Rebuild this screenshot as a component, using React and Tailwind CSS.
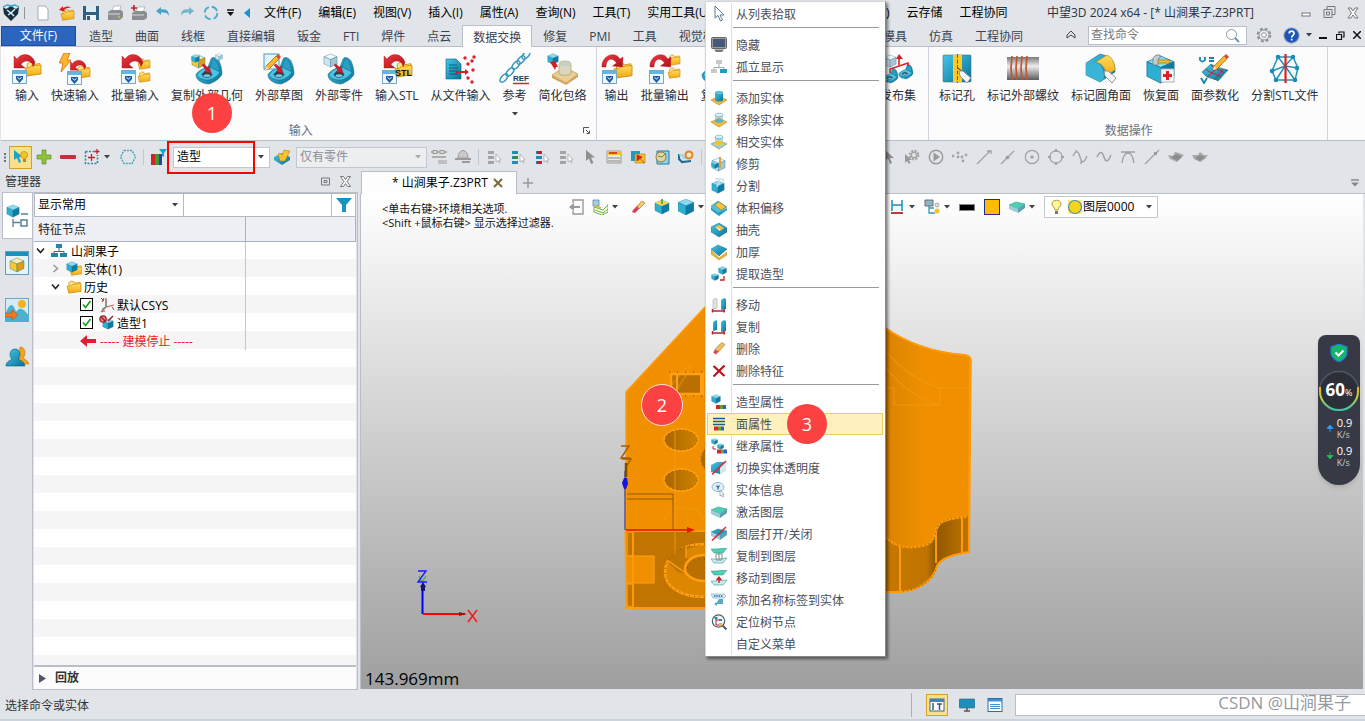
import { useState } from 'react';

const Svg = ({ size = 16, vb = 16, className = '', children }) => (
    <svg width={size} height={size} viewBox={`0 0 ${vb} ${vb}`} fill="none" className={`shrink-0 ${className}`} aria-hidden="true">
        {children}
    </svg>
);

const Caret = ({ color = '#3c404a' }) => (
    <svg width="6" height="4" viewBox="0 0 6 4" className="shrink-0" aria-hidden="true">
        <path d="M0 0h6L3 3.5z" fill={color} />
    </svg>
);

/* ---------- drawing parts shared by the icons ---------- */

const CUBE_TONES = {
    teal: ['#8bdcf0', '#2bb0d3', '#0d7ba3'],
    pale: ['#f2f8fb', '#d2e3ec', '#a9c5d4'],
    gold: ['#ffeaa6', '#fbc834', '#e09c14'],
    grey: ['#e8e8e8', '#cfcfcf', '#b0b0b0'],
};

const Cube = ({ x = 0, y = 0, s = 16, tone = 'teal' }) => {
    const [top, left, right] = CUBE_TONES[tone];
    return (
        <g transform={`translate(${x} ${y}) scale(${s / 16})`} stroke="#1b7393" strokeWidth=".4" strokeLinejoin="round">
            <path d="M1 4 8 1l7 3-7 3z" fill={top} />
            <path d="M1 4l7 3v8l-7-3.500z" fill={left} />
            <path d="M15 4 8 7v8l7-3.500z" fill={right} />
        </g>
    );
};

const Folder = ({ x = 0, y = 0, s = 16 }) => (
    <g transform={`translate(${x} ${y}) scale(${s / 16})`} stroke="#c98a06" strokeWidth=".8" strokeLinejoin="round">
        <path d="M3 13L2 3l3-2 3 1 1 1.500 6-1V11z" fill="#ffe186" />
        <path d="M0 7l4 0 2-2 10-1v9L2 15z" fill="url(#gold)" />
    </g>
);

const AppWindow = ({ x = 1, y = 17 }) => (
    <g transform={`translate(${x} ${y})`}>
        <rect x=".5" y=".5" width="14" height="13" fill="#eef7fd" stroke="#7ba7c6" />
        <path d="M1 1h13v3H1z" fill="#5fb8e4" />
        <path d="M4 6h7v3l-3.500 4L4 9z" fill="#1d5ea8" />
        <path d="M5.500 7.500l2 1.500 2-1.500" stroke="#fff" />
    </g>
);

const ArcIn = () => (
    <path d="M3 3v12h11l-4-3.500c2-4 8-5 11-1l1 3 2-4C22 2 12-2 6 6z" fill="url(#red)" stroke="#a01018" strokeWidth=".4" />
);

const ArcOut = () => (
    <path d="M1 14C0 3 14-3 19 6l3-2-.5 10-10-1 4-3C12 4 5 5 5 14z" fill="url(#red)" stroke="#a01018" strokeWidth=".4" />
);

const Base = () => (
    <g stroke="#0a6484" strokeWidth=".5" strokeLinejoin="round">
        <path d="M5 22c0-3 8-7 12-8l3-8c2-3 6-1 8 2 2 4 3 9 3 13-1 4-9 9-13 10-5 0-13-3-13-9z" fill="url(#teal)" />
        <path d="M19 14l3-9c4 2 6 7 7 14z" fill="#2a9fc4" />
        <path d="M6 22c2-4 8-8 13-8l10 5c-2 4-8 8-12 8s-9-1-11-5z" fill="#4cc3e2" />
        <ellipse cx="16" cy="21.500" rx="5" ry="3" fill="#29434f" />
        <ellipse cx="16" cy="22.700" rx="3.600" ry="1.600" fill="#8fc9da" />
    </g>
);

const RedPointer = () => <path d="M11 12l2-1 4 4 1-2 2 7-7-1 2-2z" fill="#d01f28" stroke="#8e1016" strokeWidth=".4" />;

const Tag = ({ x = 0, y = 0 }) => (
    <path transform={`translate(${x} ${y})`} d="M0 1l4 0 8 7-4 5-7-7z" fill="#f7f7f7" stroke="#888" strokeWidth=".9" />
);

const Pencil = ({ x = 0, y = 0 }) => (
    <g transform={`translate(${x} ${y})`}>
        <path d="M2 12L12 2l3 3L5 15l-4 1z" fill="#f8b62a" stroke="#9a6408" strokeWidth=".7" />
        <path d="M12 2l2-2 3 3-2 2z" fill="#e0453c" />
        <path d="M2 12l3 3-4 1z" fill="#f5dfb8" />
    </g>
);

const ribbonArt = {
    import: <><Folder x={14} y={8} s={16} /><ArcIn /><AppWindow /></>,
    quick: <><Folder x={17} y={12} s={14} /><g transform="translate(9 6) scale(.75)"><ArcIn /></g><AppWindow x={8} y={18} /><path d="M5 0h6L8 7h4L2 19l2-9H0z" fill="#ffb62b" stroke="#d06a10" strokeWidth=".8" /></>,
    batchIn: <><Folder x={19} y={5} s={12} /><Folder x={19} y={18} s={12} /><ArcIn /><AppWindow x={2} /></>,
    copyGeo: <><Base /><Cube x={0} y={1} s={15} tone="gold" /><Cube x={0} y={1} s={9} /><Cube x={24} y={0} s={8} tone="pale" /><RedPointer /></>,
    sketch: <><Base /><rect x="1" y="1" width="15" height="15" fill="#e4f5fc" stroke="#3c9cc0" /><Pencil x={1} y={1} /><RedPointer /></>,
    part: <><Base /><Cube x={0} y={0} s={15} tone="pale" /><RedPointer /></>,
    stl: <><Folder x={14} y={8} s={17} /><ArcIn /><AppWindow /><text x="14" y="23" fontSize="9" fontWeight="700" fill="#111" fontFamily="Liberation Sans, sans-serif">STL</text></>,
    fromFile: (
        <>
            <path d="M1 6h10l5 5v15H1z" fill="url(#teal)" stroke="#0a5f80" strokeWidth=".6" />
            <path d="M4 12h8M4 15h9M4 18h9M4 21h9" stroke="#0a5a78" />
            <path d="M11 18h9v-2l4 3-4 3v-2h-9z" fill="#d01f28" />
            {[[20, 5], [27, 8], [23, 11], [28, 17], [23, 25], [27, 29], [29, 4]].map(([cx, cy]) => (
                <circle key={`${cx}-${cy}`} cx={cx} cy={cy} r="1.700" fill="#d8232c" />
            ))}
        </>
    ),
    ref: (
        <>
            {[[5, 25], [11, 19], [17, 12], [22, 7], [27, 2]].map(([cx, cy]) => (
                <ellipse key={cx} cx={cx} cy={cy} rx="5" ry="2.600" transform={`rotate(-48 ${cx} ${cy})`} stroke="#3a97bd" strokeWidth="1.500" />
            ))}
            <text x="14" y="28" fontSize="8" fontWeight="700" fill="#1d3f5c" fontFamily="Liberation Sans, sans-serif">REF</text>
            <path d="M14 30.500h16" stroke="#e0222c" strokeWidth="1.500" />
        </>
    ),
    wrap: (
        <>
            <path d="M5 22l12-8 14 7-12 9z" fill="#e9cf94" stroke="#b98a3a" strokeWidth=".6" />
            <path d="M5 22v3l14 7 12-8v-3l-12 9z" fill="#d0a660" />
            <path d="M12 11c0-4 12-4 12 0v9c0 3-12 3-12 0z" fill="#dcd6bd" stroke="#9a9374" strokeWidth=".6" />
            <ellipse cx="18" cy="11" rx="6" ry="2.500" fill="#c2d2c1" />
            <Cube x={0} y={0} s={12} />
            <path d="M3 9l5 8 1-3 2 0-3-6z" fill="#d01f28" />
        </>
    ),
    export: <><Folder x={13} y={8} s={18} /><ArcOut /><AppWindow /></>,
    batchOut: <><Folder x={19} y={1} s={12} /><Folder x={19} y={14} s={12} /><ArcOut /><AppWindow x={0} /></>,
    copyOut: <><Base /><RedPointer /></>,
    publish: (
        <>
            <Cube x={1} y={1} s={14} tone="pale" />
            <g transform="translate(-1 13) scale(.55)"><Base /></g>
            <g transform="translate(14 9) scale(.55)"><Base /></g>
            <path d="M8 20v-4l18-6v3M17 12V5" stroke="#d01f28" strokeWidth="1.600" />
            <path d="M14 6l3-5 4 5z" fill="#d01f28" />
        </>
    ),
    hole: (
        <>
            <rect x="2" y="2" width="28" height="27" rx="1" fill="url(#teal)" stroke="#3a7388" strokeWidth=".6" />
            <path d="M12 2h9v27h-9z" fill="#ffc928" />
            <path d="M16.500 1v29" stroke="#7c5a00" strokeDasharray="4 1.500" />
            <path d="M17 15l5 4" stroke="#333" />
            <Tag x={18} y={17} />
        </>
    ),
    thread: (
        <>
            <path d="M0 4h32v23H0z" fill="url(#steel)" />
            <path d="M5 3l-1 12 1 12M10 3L9 15l1 12M15 3l-1 12 1 12M20 3l-1 12 1 12" stroke="#c0552e" strokeWidth="1.700" />
        </>
    ),
    fillet: (
        <>
            <path d="M1 10L15 1l7 2c7 3 8 10 8 16L15 29 1 22z" fill="url(#teal)" stroke="#0a5a78" strokeWidth=".5" />
            <path d="M11 9L22 2c5 2 8 8 8 15l-9 6c0-7-3-12-10-14z" fill="url(#gold)" stroke="#b87d05" strokeWidth=".5" />
            <path d="M1 10l10 0c6 2 8 8 8 16l-4 3L1 22z" fill="#3ab4d6" />
            <Tag x={19} y={17} />
        </>
    ),
    heal: (
        <>
            <Cube x={0} y={1} s={31} />
            <path d="M9 7h16v3H9z" fill="#f7bd2d" stroke="#8d6205" strokeWidth=".6" />
            <path d="M8 12V5l3-3h4v3l-2 1v6z" fill="#c3cbd0" stroke="#6b757c" strokeWidth=".7" />
            <rect x="16" y="16" width="13" height="13" fill="#f4f8fa" stroke="#a8b5bc" />
            <path d="M21 18h3v3h3v3h-3v3h-3v-3h-3v-3h3z" fill="#e01f26" />
        </>
    ),
    param: (
        <>
            <path d="M3 19l9-8c5 3 9 4 17 6l-10 11C13 24 9 27 3 19z" fill="url(#teal)" stroke="#07506e" strokeWidth=".5" />
            <path d="M7 16c5 5 9 4 15 8M12 12c5 5 9 5 13 8M8 24c4-2 8-8 12-11M15 27c3-4 6-6 9-11" stroke="#c7202a" />
            <path d="M1 4v3q2.500 3 5 0V4M10 5h5M10 8h5M2 25l3 5 3-5" stroke="#1484b0" strokeWidth="1.800" />
            <Pencil x={13} y={1} />
        </>
    ),
    split: (
        <>
            <path d="M9 4h15l5 11-3 12H7L3 18zM3 18l13-5 13 2M16 13L9 4M16 13l8-9M16 13l-9 14M16 13l10 14" stroke="#2191ba" strokeWidth="1.500" />
            {[[9, 4], [24, 4], [26, 27], [3, 18], [7, 27], [28, 15]].map(([cx, cy]) => (
                <circle key={`${cx}-${cy}`} cx={cx} cy={cy} r="2.300" fill="#1d8ab2" />
            ))}
            <path d="M16.500 1v29" stroke="#e01f26" strokeWidth="2.200" />
        </>
    ),
};

const Plate = ({ tone = '#f5b93a' }) => <path d="M0 10l8-4 8 4-8 5z" fill={tone} stroke="#a8690c" strokeWidth=".5" />;
const Cyl = ({ fill = 'url(#teal)', top = '#5cc6e2' }) => (
    <>
        <path d="M4 3v7c0 2 8 2 8 0V3z" fill={fill} />
        <ellipse cx="8" cy="3" rx="4" ry="1.800" fill={top} stroke="#0f7fa5" strokeWidth=".4" />
    </>
);
const Swatches = ({ x = 5, y = 11 }) => (
    <g transform={`translate(${x} ${y})`}>
        <path d="M0 0h4v4H0z" fill="#d9262c" />
        <path d="M4 0h3v4H4z" fill="#5ea32c" />
        <path d="M7 0h3v4H7z" fill="#2c5fd0" />
    </g>
);
const Layer = ({ y = 0, top = '#4fd0b4' }) => (
    <g transform={`translate(0 ${y})`}>
        <path d="M0 4l7-3 9 2-7 5z" fill={top} stroke="#1a8f86" strokeWidth=".5" />
        <path d="M0 4v4l9 4V8z" fill="#9ccdd6" />
        <path d="M9 8l7-5v4l-7 5z" fill="#5a9fb2" />
    </g>
);
const Sheet = ({ y = 0, fill = '#4fd0b4' }) => <path transform={`translate(0 ${y})`} d="M0 1l5 0 11-1-4 5-9 0z" fill={fill} stroke="#1c8c80" strokeWidth=".5" />;

const menuArt = {
    pick: <path d="M4 0v12l3-2.500L9.500 15l2-1L9 9h4z" fill="#fff" stroke="#5d7890" />,
    hide: <><rect x=".5" y=".5" width="15" height="11" rx="1" fill="#9a9a9a" stroke="#666" /><rect x="2" y="2" width="12" height="8" fill="#48587a" /><path d="M3 12.500h10l-2 2.500H5z" fill="#777" /></>,
    isolate: <><path d="M8 5v4M3 11V8.500h10V11" stroke="#aaa" /><rect x="5" y="1" width="6" height="4" fill="#c8c8c8" /><rect x="0" y="10" width="6" height="4" fill="#c8c8c8" /><rect x="9" y="10" width="7" height="4" fill="#1c9ec4" /></>,
    add: <><Plate /><Cyl /></>,
    remove: <><Cyl fill="#b7dfec" top="#dff1f7" /><Plate /><ellipse cx="8" cy="9" rx="4" ry="1.800" fill="#4fb0cf" /></>,
    intersect: <><Plate tone="#8fd3e6" /><Cyl fill="#a6dcea" top="#d8f1f8" /><ellipse cx="8" cy="9" rx="4" ry="2.500" fill="#f4c32c" /></>,
    trim: <><Cube x={0} y={1} s={15} tone="pale" /><Cube x={0} y={5} s={8} /><path d="M9 1v11" stroke="#e0a23a" strokeWidth="2" /></>,
    divide: <><Cube x={0} y={2} s={14} /><path d="M9 2L6 9M4 1h8v3" stroke="#cfdfe6" strokeWidth="1.400" /></>,
    offset: <><path d="M0 7l7 6 9-5v2l-8 6-8-6z" fill="#1c9ec4" /><path d="M0 6l7-5 9 6-9 6z" fill="#54bfd9" stroke="#0a5a78" strokeWidth=".4" /><path d="M4 5l4-3 7 5-5 3z" fill="#fbc63a" stroke="#a97408" strokeWidth=".5" /></>,
    shell: <><path d="M0 5l8-4 8 5v4l-8 5-8-5z" fill="url(#teal)" stroke="#0a5a78" strokeWidth=".4" /><path d="M4 5l4-2 5 3-4 3z" fill="#f6c13b" /><path d="M4 5l5 2v2z" fill="#fff3c8" /></>,
    thicken: <><path d="M0 6l8 8 8-6v3l-8 5-8-6z" fill="#f3b52c" stroke="#a97408" strokeWidth=".4" /><path d="M0 5l7-4 9 4-8 7z" fill="url(#teal)" stroke="#0a5a78" strokeWidth=".4" /></>,
    extract: <><Cube x={7} y={0} s={9} /><Cube x={0} y={7} s={8} /><path d="M13 10v4H9" stroke="#c7202a" strokeWidth="1.300" /></>,
    move: <><path d="M2 3l3-2 1 1v9l-4 1z" fill="#e3e3e3" stroke="#999" strokeWidth=".5" /><path d="M10 3l3-2 2 1v10l-5 1z" fill="url(#teal)" /><path d="M1 14h13M1.500 12v3.500M13 12v3.500" stroke="#b8242c" strokeWidth="1.500" /></>,
    copy: <><path d="M2 3l3-2 1 1v9l-4 1z" fill="url(#teal)" /><path d="M10 3l3-2 2 1v10l-5 1z" fill="url(#teal)" /><path d="M1 14h13M1.500 12v3.500M13 12v3.500" stroke="#b8242c" strokeWidth="1.500" /></>,
    erase: <><path d="M8 4l3-2.500 3 2-6 7-4-2z" fill="#efc05c" stroke="#8a6a3a" strokeWidth=".5" /><path d="M4 8.500l4 2-3 3-3-2z" fill="#d9515c" /></>,
    remFeat: <path d="M2.500 3l11 10M13.500 2.500l-11 11" stroke="#b9141c" strokeWidth="2.200" />,
    shapeAttr: <><Cube x={0} y={0} s={10} /><Swatches /></>,
    faceAttr: <><path d="M2 2.500h12M2 5.500h12M2 8.500h12" stroke="#1d5f86" strokeWidth="1.500" /><Swatches x={3} y={10.5} /></>,
    inherit: <><Cube x={0} y={0} s={7} /><Cube x={6} y={5} s={7} /><path d="M2 8v3h3" stroke="#c7202a" /><Swatches x={6} y={11.5} /></>,
    opacity: <><path d="M0 5l6-3 9 0v8l-6 4-9-2z" fill="url(#teal)" /><path d="M9 14V6l6-4v8z" fill="#d5eaf1" /><path d="M1 14.500L15 1" stroke="#e0222c" strokeWidth="1.500" /></>,
    info: <><ellipse cx="7" cy="5" rx="6" ry="4.500" fill="#dbeefa" stroke="#92b7cc" /><path d="M5.500 3.500l1.500 2 1.500-2M7 5.500v2" stroke="#2c5d86" strokeWidth="1.200" /><path d="M9 8v6l1.500-1 1 2 1.200-.6-1-2H13z" fill="#fff" stroke="#7d95a5" strokeWidth=".7" /></>,
    layerOn: <Layer y={2} />,
    layerToggle: <><Layer y={2} top="#1c9ec4" /><path d="M1 14.500L15 1" stroke="#e0222c" strokeWidth="1.500" /></>,
    layerCopy: <><Sheet y={10} fill="#c9eaf2" /><path d="M5 6h6v6H5zM8 4v8" stroke="#8a8f92" /><Sheet y={0} /></>,
    layerMove: <><Sheet y={10} fill="#c9eaf2" /><Sheet y={0} /><path d="M8 13V8M6 9.500L8 7l2 2.500z" fill="#d01f28" stroke="#d01f28" strokeWidth="1.300" /></>,
    label: <><path d="M0 2h13l2 2-2 2H2z" fill="#d8edf7" stroke="#6fa3bd" strokeWidth=".6" /><path d="M3 4h9" stroke="#2c6d90" strokeDasharray="1.500 .8" strokeWidth="1.400" /><path d="M8 7l4 0v5H6v2l-3-2 3-2z" fill="#5aa8c8" /></>,
    locate: <><circle cx="7.500" cy="7" r="6.200" stroke="#555f66" strokeWidth="1.200" fill="#f3f8fa" /><path d="M5 3v8h3M5 6h4" stroke="#b8242c" /><rect x="3.500" y="3" width="3" height="2" fill="#1c8fb6" /><rect x="8" y="5" width="3" height="2" fill="#1c8fb6" /><rect x="8" y="9" width="3" height="3" fill="#f0b62e" /><path d="M11.500 11.500l4 4" stroke="#555f66" strokeWidth="2" /></>,
};

const menuGroups = [
    [['pick', '从列表拾取']],
    [['hide', '隐藏'], ['isolate', '孤立显示']],
    [['add', '添加实体'], ['remove', '移除实体'], ['intersect', '相交实体'], ['trim', '修剪'], ['divide', '分割'], ['offset', '体积偏移'], ['shell', '抽壳'], ['thicken', '加厚'], ['extract', '提取造型']],
    [['move', '移动'], ['copy', '复制'], ['erase', '删除'], ['remFeat', '删除特征']],
    [['shapeAttr', '造型属性'], ['faceAttr', '面属性'], ['inherit', '继承属性'], ['opacity', '切换实体透明度'], ['info', '实体信息'], ['layerOn', '激活图层'], ['layerToggle', '图层打开/关闭'], ['layerCopy', '复制到图层'], ['layerMove', '移动到图层'], ['label', '添加名称标签到实体'], ['locate', '定位树节点'], ['', '自定义菜单']],
];

function ContextMenu() {
    return (
        <div role="menu" className="absolute left-[705px] top-px w-[181px] z-20 bg-white border border-[#d4d6da] border-b-[#8a8a8a] border-r-[#8a8a8a] shadow-[2px_2px_3px_rgba(0,0,0,0.5)] py-px text-[#4a4e5a]">
            <div className="relative pl-px pr-0.5 before:absolute before:left-[25px] before:top-0 before:bottom-0 before:w-px before:bg-[#dcdee2]">
                {menuGroups.map((group, i) => (
                    <div key={i}>
                        {i > 0 && <div className="ml-[26px] mr-1 mt-0.5 mb-1.5 h-px bg-[#9a9a9a]" />}
                        {group.map(([icon, label]) => (
                            <button
                                key={label}
                                type="button"
                                role="menuitem"
                                className={`relative flex items-center w-full h-[22px] text-left ${icon === 'faceAttr' ? 'bg-[#fff0bd] outline outline-[#f0cd5a] -outline-offset-1' : ''}`}
                            >
                                <span className="w-6 flex justify-center mr-[5px]">
                                    {icon && <Svg>{menuArt[icon]}</Svg>}
                                </span>
                                <span className="pt-0.5">{label}</span>
                            </button>
                        ))}
                    </div>
                ))}
            </div>
        </div>
    );
}

/* ---------- title bar ---------- */

const quickIcons = [
    ['新建', <path key="a" d="M3 1h7l3 3v11H3z" fill="#fff" stroke="#a5acb5" />],
    ['打开', <g key="a"><Folder x={2} y={3} s={13} /><path d="M0 5l4-4v2c3-2 6-2 8 0-3-.5-5 0-7 2l2 2z" fill="#d01f28" /></g>],
    ['保存', <g key="a"><path d="M0 1h16v14H0z" fill="#315f80" /><path d="M3 1h10v6H3z" fill="#d9eaf3" /><path d="M3 10h10v5H3z" fill="#eef2f4" /><path d="M4 11h3v4H4z" fill="#315f80" /></g>],
    ['打印', <g key="a"><path d="M5 6l2-5h7l-2 6z" fill="#fff" stroke="#999" strokeWidth=".6" /><path d="M1 7l3-2h10l2 2v5l-3 3H1z" fill="#8a8d91" /><path d="M1 9h12" stroke="#d8d8d8" /><circle cx="12" cy="12" r="1" fill="#b2d62c" /></g>],
    ['批量打印', <g key="a"><path d="M5 6l2-4h7l-2 5z" fill="#fff" stroke="#999" strokeWidth=".6" /><path d="M1 8l3-2h10l2 2v5l-3 2H1z" fill="#8a8d91" /><path d="M1 10h12" stroke="#d8d8d8" /><path d="M3 0v6M0 3h6" stroke="#b8242c" strokeWidth="1.600" /></g>],
    ['撤销', <path key="a" d="M1 6l5-4v2.500c6-1.500 8 2 8 6.500-1-3-4-4-8-3.500V10z" fill="#4aa3c4" />],
    ['重做', <path key="a" d="M15 6l-5-4v2.500C4 3 2 6.500 2 11c1-3 4-4 8-3.500V10z" fill="#6fb5cc" />],
    ['再生', <circle key="a" cx="8" cy="8" r="6.300" stroke="#4aabc9" strokeWidth="1.800" strokeDasharray="6.900 3" />],
];

const menus = ['文件(F)', '编辑(E)', '视图(V)', '插入(I)', '属性(A)', '查询(N)', '工具(T)', '实用工具(U)'];
const tabs = ['造型', '曲面', '线框', '直接编辑', '钣金', 'FTI', '焊件', '点云', '数据交换', '修复', 'PMI', '工具', '视觉样式'];

function TitleBar() {
    return (
        <header className="flex items-center h-[25px] shrink-0 text-black">
            <div className="flex items-center w-[879px] shrink-0 overflow-hidden whitespace-nowrap">
                <Svg size={18} vb={18} className="ml-0.5">
                    <path d="M1 3l3 2 5-3 5 3 3-2-1 7-7 7-7-7z" fill="#16303f" />
                    <path d="M5 6l4 3 4-4M6 11l3-2 3 3" stroke="#d9f0fa" strokeWidth="1.500" />
                    <path d="M1 3l4-2 4 1 4-1 4 2" stroke="#2aa4cf" strokeWidth="1.300" />
                </Svg>
                <span className="w-px h-3 bg-[#8f949c] ml-1 mr-1.5" />
                {quickIcons.map(([label, art]) => (
                    <button key={label} type="button" aria-label={label} className="w-6 flex justify-center">
                        <Svg>{art}</Svg>
                    </button>
                ))}
                <button type="button" aria-label="自定义快速访问" className="w-3.5 flex justify-center">
                    <Svg size={7} vb={7}><path d="M0 1h7" stroke="#111" strokeWidth="1.500" /><path d="M0 3h7L3.500 7z" fill="#111" /></Svg>
                </button>
                <button type="button" aria-label="收起菜单" className="w-5 flex justify-center mr-[7px]">
                    <Svg size={10} vb={10}><path d="M8 0v10L2 5z" fill="#1593d8" /></Svg>
                </button>
                <nav className="flex gap-[17px]">
                    {menus.map(m => <button key={m} type="button">{m}</button>)}
                </nav>
            </div>
            <nav className="flex gap-[17px] whitespace-nowrap">
                <button type="button">(I)</button>
                <button type="button">云存储</button>
                <button type="button">工程协同</button>
            </nav>
            <h1 className="ml-auto mr-[46px] whitespace-nowrap text-[#2d3342]">中望3D 2024 x64 - [* 山涧果子.Z3PRT]</h1>
            <div className="flex items-center gap-[11px] pr-1.5">
                <button type="button" aria-label="最小化"><Svg size={12} vb={12}><rect x="2" y="6" width="8" height="3" stroke="#777" fill="#fff" /></Svg></button>
                <button type="button" aria-label="还原"><Svg size={13} vb={13}><path d="M4 3.500v-3h8v8H9M1 3.500h8v8H1zM3.500 6h3v3h-3z" stroke="#777" /></Svg></button>
                <button type="button" aria-label="关闭"><Svg size={12} vb={12}><path d="M1 1h3l2 3 2-3h3L7.500 6 11 11H8L6 8l-2 3H1l3.500-5z" fill="#fff" stroke="#777" /></Svg></button>
            </div>
        </header>
    );
}

function TabRow() {
    return (
        <div className="flex h-[22px] shrink-0 shadow-[inset_0_-1px_0_#b9bec8] text-[#3b4252]">
            <div className="flex w-[872px] shrink-0 overflow-hidden whitespace-nowrap pl-px">
                <button type="button" className="w-[75px] my-px mr-0.5 bg-[#2b65bd] border border-[#1c4c9c] text-white">文件(F)</button>
                {tabs.map(t => (
                    <button
                        key={t}
                        type="button"
                        className={`pt-0.5 ${t === '数据交换' ? 'px-2.5 bg-[#fdfdfd] border border-b-0 border-[#b9bec8]' : 'px-[11px]'}`}
                    >
                        {t}
                    </button>
                ))}
            </div>
            {['模具', '仿真', '工程协同'].map(t => (
                <button key={t} type="button" className="pt-0.5 px-[11px] whitespace-nowrap">{t}</button>
            ))}
            <div className="flex items-center ml-auto pr-1 pb-0.5">
                <button type="button" aria-label="折叠功能区" className="mr-3">
                    <Svg size={10} vb={10}><path d="M1 5l4-4 4 4M1 8V5M9 8V5M1 8l4-3 4 3" stroke="#444" /></Svg>
                </button>
                <label className="flex items-center w-[159px] h-[19px] bg-white border border-[#b9bec8]">
                    <input type="search" aria-label="查找命令" placeholder="查找命令" className="w-full min-w-0 px-0.5 outline-none placeholder:text-[#777]" />
                    <Svg size={15} vb={15} className="mr-1.5"><circle cx="6.500" cy="6.500" r="5" stroke="#8b98a2" /><path d="M10 10l4 4" stroke="#5a9ab8" strokeWidth="2" /></Svg>
                </label>
                <button type="button" aria-label="设置" className="ml-[9px]">
                    <Svg><circle cx="8" cy="8" r="6.300" stroke="#8d9298" strokeWidth="2" strokeDasharray="2.900 2.050" /><circle cx="8" cy="8" r="5" stroke="#8d9298" fill="#eceef0" /><circle cx="8" cy="8" r="2.300" stroke="#8d9298" fill="#fff" /></Svg>
                </button>
                <button type="button" aria-label="帮助" className="flex items-center gap-1.5 ml-[11px] mr-[7px]">
                    <Svg size={17} vb={16}>
                        <circle cx="8" cy="8" r="7.300" fill="#1c56b5" stroke="#a9b6c9" />
                        <path d="M5.800 6.200c0-3 4.600-3 4.600 0 0 1.800-2.200 1.600-2.200 3.600M8.200 11v1.700" stroke="#fff" strokeWidth="1.600" />
                    </Svg>
                    <Caret />
                </button>
                <button type="button" aria-label="最小化文档" className="mr-[9px]"><Svg size={8} vb={8}><path d="M0 7h8" stroke="#111" strokeWidth="2" /></Svg></button>
                <button type="button" aria-label="还原文档" className="mr-2"><Svg size={9} vb={9}><path d="M3 2.500V1h5v5H6.500M.5 3.500h5v5h-5z" stroke="#111" strokeWidth="1.200" /></Svg></button>
                <button type="button" aria-label="关闭文档"><Svg size={8} vb={8}><path d="M0 0l8 8M8 0L0 8" stroke="#111" strokeWidth="1.500" /></Svg></button>
            </div>
        </div>
    );
}

/* ---------- ribbon ---------- */

const importTools = [['import', '输入'], ['quick', '快速输入'], ['batchIn', '批量输入'], ['copyGeo', '复制外部几何'], ['sketch', '外部草图'], ['part', '外部零件'], ['stl', '输入STL'], ['fromFile', '从文件输入'], ['ref', '参考'], ['wrap', '简化包络']];
const exportTools = [['export', '输出'], ['batchOut', '批量输出'], ['copyOut', '复制']];
const dataTools = [['hole', '标记孔'], ['thread', '标记外部螺纹'], ['fillet', '标记圆角面'], ['heal', '恢复面'], ['param', '面参数化'], ['split', '分割STL文件']];

function RibbonGroup({ tools, label, launcher, className = '' }) {
    return (
        <section className={`relative flex flex-col justify-between shrink-0 border-r border-[#cfd4de] ${className}`}>
            <div className="flex">
                {tools.map(([icon, text]) => (
                    <button key={icon} type="button" className="flex flex-col items-center px-1.5 pt-1.5 whitespace-nowrap">
                        <Svg size={32} vb={32} className="-mx-1">{ribbonArt[icon]}</Svg>
                        <span className="mt-[3px]">{text}</span>
                        {icon === 'ref' && <span className="mt-2"><Caret /></span>}
                    </button>
                ))}
            </div>
            {label && <h2 className="text-center text-[#6b7080] pb-px">{label}</h2>}
            {launcher && (
                <button type="button" aria-label="更多选项" className="absolute right-1.5 bottom-1.5">
                    <Svg size={7} vb={7}><path d="M.5 6V.5H6M3 3l3 3M6.500 3.500v3h-3" stroke="#555" /></Svg>
                </button>
            )}
        </section>
    );
}

function Ribbon() {
    return (
        <div className="flex h-[94px] shrink-0 ml-px bg-[#fcfcfc] border-b border-[#b9bec8] text-[#2b2e36]">
            <div className="flex w-[873px] shrink-0 overflow-hidden">
                <RibbonGroup tools={importTools} label="输入" launcher className="pl-2 pr-[3px]" />
                <RibbonGroup tools={exportTools} className="pl-0.5 border-r-0" />
            </div>
            <RibbonGroup tools={[['publish', '发布集']]} className="pr-1.5" />
            <RibbonGroup tools={dataTools} label="数据操作" className="pl-1 pr-0.5" />
        </div>
    );
}

/* ---------- selection toolbar ---------- */

const Dots = ({ color }) => (
    <g>
        <path d="M2 2h6v3H2zM2 7h6v3H2zM2 12h6v3H2z" fill={color} />
        <path d="M10 5v8l2-1.500L13 14l1-.5-1-2.500h2z" fill="#fff" stroke="#a8a8a8" strokeWidth=".8" />
    </g>
);

const filterIcons = [
    <g key="0" stroke="#9a9a9a"><path d="M0 3h16M1 8h14" strokeWidth="1.500" /><rect x="2" y="1.500" width="4" height="3" fill="#ddd" /><rect x="9" y="1.500" width="4" height="3" fill="#ddd" /><path d="M7 12h9M7 14h9" /></g>,
    <g key="1" stroke="#9a9a9a"><path d="M3 9c0-10 10-10 10 0z" fill="#c9c9c9" /><path d="M0 10h16M7 13h8" strokeWidth="2" /></g>,
];
const pickIcons = [
    <Dots key="2" color="#a3a3a3" />,
    <g key="3"><Dots color="#1c8fb6" /><path d="M3 7h4v3H3z" fill="#2f8f3c" /></g>,
    <g key="4"><Dots color="#1c8fb6" /><path d="M3 2h5v3H3zM3 12h5v3H3z" fill="#c7202a" /></g>,
    <Dots key="5" color="#a3a3a3" />,
    <path key="6" d="M4 1v11l3-2.500L9 15l2.500-1L9 8.500h4z" fill="#8f8f8f" />,
    <g key="7"><path d="M1 2h14v12H1z" fill="#e8e8e8" stroke="#999" /><path d="M1 2h14v4H1z" fill="#f5c22f" /><path d="M3 4h8" stroke="#c7202a" strokeWidth="1.500" /><path d="M2 9h12M2 12h12" stroke="#888" /></g>,
    <g key="8"><path d="M1 2h9v10H1z" fill="#1c9ec4" /><path d="M5 5h10v9H5z" fill="#f5c22f" stroke="#b0790a" strokeWidth=".6" /><path d="M7 6v6l5-4zM10 9l4 5" fill="#d01f28" stroke="#d01f28" strokeWidth=".8" /></g>,
    <g key="9"><path d="M3 2h12v13H3z" fill="#8fd0e4" stroke="#1c7fa3" /><circle cx="7" cy="8" r="5" fill="#e7d2a5" stroke="#8e7a4a" /><path d="M4 7l4 1 4-4" stroke="#4b9b3c" /></g>,
    <g key="10"><path d="M1 5v5l3 3 9-1" stroke="#1c6f93" strokeWidth="2.200" /><path d="M1 6h4v3h5" stroke="#9fcfe0" strokeWidth="1.400" /><circle cx="11" cy="6" r="3.500" stroke="#d8862a" strokeWidth="2" fill="#fbe3b4" /></g>,
];
const snapIcons = [
    <path key="0" d="M5 1v11l3-2.500L10 15l2-1-2-5h4z" fill="#8f8f8f" />,
    <g key="1"><circle cx="10" cy="6" r="4.200" stroke="#a5a5a5" strokeWidth="2.400" strokeDasharray="2 1.300" /><circle cx="10" cy="6" r="2.800" stroke="#a5a5a5" strokeWidth="1.500" /><path d="M1 5v9l2-2 2 3 1.500-1L5 11h3z" fill="#999" /></g>,
    <g key="2"><circle cx="8" cy="8" r="6.700" stroke="#999" strokeWidth="1.400" /><path d="M5.500 3.500l6.500 4.500-6.500 4.500z" fill="#999" /></g>,
    <g key="3" fill="#a3a3a3">{[[1, 7], [6, 4], [6, 8], [10, 8], [14, 6], [11, 12]].map(([x, y]) => <circle key={`${x}${y}`} cx={x} cy={y} r="1.400" />)}</g>,
    <path key="4" d="M1 15L14 2M11 2h4v3" stroke="#a0a0a0" strokeWidth="1.300" />,
    <g key="5"><path d="M1 15L14 2" stroke="#a0a0a0" strokeWidth="1.300" /><circle cx="7.500" cy="8.500" r="1.800" fill="#999" /></g>,
    <g key="6"><circle cx="8" cy="8" r="6.700" stroke="#a0a0a0" strokeWidth="1.200" /><circle cx="8" cy="8" r="1.500" fill="#999" /></g>,
    <g key="7"><circle cx="8" cy="8" r="6.200" stroke="#a0a0a0" strokeWidth="1.200" /><path d="M8 0v3M8 13v3M0 8h3M13 8h3" stroke="#a0a0a0" strokeWidth="2" /></g>,
    <path key="8" d="M1 7c3-6 5-6 7 1s4 6 7-1M4 1v3M9 12v3" stroke="#a0a0a0" strokeWidth="1.300" />,
    <path key="9" d="M1 8c3-6 5-6 7 0s4 5 7-2" stroke="#a0a0a0" strokeWidth="1.500" />,
    <path key="10" d="M1 3h14M2 14C3 7 5 4 8 4s5 3 6 10" stroke="#a0a0a0" strokeWidth="1.300" />,
    <g key="11"><path d="M1 15L15 1" stroke="#a0a0a0" strokeWidth="1.300" /><path d="M10 3h3v3h-3z" fill="#999" /></g>,
    <g key="12"><path d="M0 6l5 1 2-4 4 1 5 2-3 3-4 4-7-3z" fill="#a9a9a9" /><path d="M3 8l6-3 5 3-5 4z" fill="#8c8c8c" /></g>,
    <g key="13"><path d="M0 6l6 0 2-3 4 3 4 0-3 4-5 3-6-3z" fill="#a9a9a9" /><path d="M3 9l5-3 5 2-5 4z" fill="#8c8c8c" /></g>,
];

const ToolButton = ({ label, disabled, children }) => (
    <button type="button" aria-label={label} disabled={disabled} className="w-6 h-6 shrink-0 flex items-center justify-center">
        <Svg>{children}</Svg>
    </button>
);

const Divider = () => <span className="w-px h-4 mx-[3px] shrink-0 bg-[#c3c7ce]" />;

function Combo({ label, value, className = '', disabled }) {
    return (
        <span className={`relative flex items-center shrink-0 border border-[#c3c7ce] bg-white ${className}`}>
            <select aria-label={label} disabled={disabled} className="appearance-none w-full h-full outline-none pl-[3px]">
                <option>{value}</option>
            </select>
            <span className="absolute right-[5px] pointer-events-none"><Caret color={disabled ? '#aaa' : '#3c404a'} /></span>
        </span>
    );
}

function SelectionBar() {
    return (
        <div className="flex items-center h-[30px] pt-0.5 shrink-0">
            <div className="flex items-center w-[876px] shrink-0 overflow-hidden">
                <Svg size={9} vb={9}><path d="M5 0v9" stroke="#6a7080" strokeWidth="2" strokeDasharray="2 1.500" /></Svg>
                <button type="button" aria-label="智能选择" className="w-[23px] h-[23px] flex items-center justify-center bg-[#fbe08b] border border-[#d3a12a]">
                    <Svg><path d="M1 1v10l3-2 2 5 2-1-2-5 4 0z" fill="#1aa3cf" /><circle cx="11" cy="6" r="3.500" fill="#f7c22c" stroke="#b88a1a" strokeWidth=".7" /><path d="M10 10h3v3h-3z" fill="#a38545" /></Svg>
                </button>
                <ToolButton label="添加选择"><path d="M6 1h4v5h5v4h-5v5H6v-5H1V6h5z" fill="#8fc13c" stroke="#5f9420" strokeWidth=".7" /></ToolButton>
                <ToolButton label="移除选择"><rect x="0" y="6" width="16" height="4" rx="1" fill="#c8303c" /></ToolButton>
                <ToolButton label="框选"><path d="M1.500 2.500h9M1.500 2.500v12h12V6" stroke="#2b86a8" strokeWidth="1.600" strokeDasharray="2 1.500" /><path d="M7.500 5v7M4 8.500h7M13 0v5M10.500 2.500h5" stroke="#c7202a" strokeWidth="1.300" /></ToolButton>
                <span className="mr-1.5"><Caret /></span>
                <ToolButton label="多边形选择"><path d="M4 1.500h8L15.500 8 12 14.500H4L.5 8z" stroke="#4ba3c0" strokeWidth="1.400" strokeDasharray="2 1" /></ToolButton>
                <Divider />
                <ToolButton label="过滤器"><path d="M0 5h4v11H0z" fill="#d2232c" /><path d="M4 5h4v11H4z" fill="#3b9a35" /><path d="M8 5h3v11H8z" fill="#2a3fa8" /><path d="M8 0h8l-3 4v4l-2-1V4z" fill="#1aa3cf" /></ToolButton>
                <Combo label="选择类型" value="造型" className="w-[97px] h-[21px] ml-0.5 text-black" />
                <ToolButton label="选择层级"><path d="M0 8l8-4 8 4v3l-8 5-8-5z" fill="url(#teal)" /><path d="M4 5l2-1 2 2 2-5 6 1-5 10H6z" fill="#f7c22c" stroke="#a97408" strokeWidth=".5" /></ToolButton>
                <Combo label="范围" value="仅有零件" disabled className="w-[131px] h-[21px] ml-0.5 text-[#8c8f96] bg-[#eceef0]!" />
                {filterIcons.map((a, i) => <ToolButton key={i} label={`筛选 ${i + 1}`} disabled>{a}</ToolButton>)}
                <Divider />
                {pickIcons.map((a, i) => <ToolButton key={i} label={`拾取 ${i + 1}`}>{a}</ToolButton>)}
                <Divider />
            </div>
            {snapIcons.map((a, i) => <ToolButton key={i} label={`捕捉 ${i + 1}`} disabled>{a}</ToolButton>)}
        </div>
    );
}

/* ---------- manager panel ---------- */

const sideIcons = [
    ['历史管理', <g key="a"><Cube x={0} y={0} s={14} /><path d="M7 15v8M7 18.500h7M15 10h7" stroke="#5a7f95" strokeWidth="1.300" /><rect x="15" y="16" width="6" height="6" stroke="#5a7f95" strokeWidth="1.500" /></g>],
    ['视图管理', <g key="a"><rect x=".5" y=".5" width="23" height="23" fill="#e6f4fa" stroke="#5f9fba" /><path d="M1 1h22v4H1z" fill="#1993bb" /><Cube x={4} y={6} s={16} tone="gold" /></g>],
    ['视觉管理', <g key="a"><rect x=".5" y=".5" width="23" height="23" fill="#d4ecf6" stroke="#6ea7bf" /><path d="M0 18c4-14 8-14 11-4 3-5 7-5 13 4v6H0z" fill="#4db0cd" /><circle cx="17" cy="6" r="4" fill="#f9b024" /><path d="M0 15h7v-3l6 5-6 5v-3H0z" fill="#ef7a22" stroke="#c14f10" strokeWidth=".6" /></g>],
    ['角色管理', <g key="a"><path d="M15 2c6 0 6 8 3 11 3 2 5 3 6 6H13z" fill="#f2a21e" stroke="#bd7608" strokeWidth=".6" /><path d="M10 4c6 0 6 8 3 10 4 2 6 3 7 7H1c0-4 3-5 6-7C4 12 4 4 10 4z" fill="url(#teal)" stroke="#0a5a78" strokeWidth=".6" /></g>],
];

const Chevron = ({ open }) => (
    <Svg size={9} vb={9} className="mx-0.5">
        <path d={open ? 'M1 2.500l3.500 4 3.500-4' : 'M2.500 1l4 3.500-4 3.500'} stroke={open ? '#222' : '#999'} strokeWidth="1.600" />
    </Svg>
);

function FeatureCheck({ label }) {
    const [on, setOn] = useState(true);
    return (
        <span className="relative w-[13px] h-[13px] shrink-0 mr-1.5">
            <input
                type="checkbox"
                aria-label={label}
                checked={on}
                onChange={e => setOn(e.target.checked)}
                className="block appearance-none w-[13px] h-[13px] border border-black bg-white"
            />
            {on && <Svg size={13} vb={13} className="absolute inset-0 pointer-events-none"><path d="M3 6.500l2.500 3 5-6.500" stroke="#16a01c" strokeWidth="1.700" /></Svg>}
        </span>
    );
}

function FeatureTree() {
    const cell = 'h-[18px] p-0 border-r border-[#c3c7d2]';
    return (
        <table className="w-full table-fixed border-collapse text-black">
            <thead>
                <tr className="h-6 bg-[#eef0f5] text-left">
                    <th scope="col" className="w-[211px] p-0 pl-1 pt-0.5 font-normal border-r border-b border-[#a9b0bf] text-[#222]">特征节点</th>
                    <th scope="col" aria-label="状态" className="p-0 border-b border-r border-[#a9b0bf]" />
                </tr>
            </thead>
            <tbody>
                <tr>
                    <td className={cell}>
                        <div className="flex items-center">
                            <Chevron open />
                            <Svg className="mx-1"><path d="M8 5v4M3 11V8.500h10V11" stroke="#2b6e8f" /><path d="M5 1h6v4H5zM0 10h7v4H0zM9 10h7v4H9z" fill="#1f86b0" /></Svg>
                            <span className="pt-0.5">山涧果子</span>
                        </div>
                    </td>
                    <td />
                </tr>
                <tr>
                    <td className={cell}>
                        <div className="flex items-center pl-[15px]">
                            <Chevron />
                            <Svg className="ml-1 mr-0.5"><Folder x={4} y={3} s={12} /><Cube x={0} y={0} s={12} /></Svg>
                            <span className="pt-0.5">实体(1)</span>
                        </div>
                    </td>
                    <td />
                </tr>
                <tr>
                    <td className={cell}>
                        <div className="flex items-center pl-[15px]">
                            <Chevron open />
                            <Svg className="ml-1 mr-0.5"><Folder x={1} y={1} s={14} /></Svg>
                            <span className="pt-0.5">历史</span>
                        </div>
                    </td>
                    <td />
                </tr>
                <tr>
                    <td className={cell}>
                        <div className="flex items-center pl-[46px]">
                            <FeatureCheck label="默认CSYS" />
                            <Svg className="mr-0.5"><path d="M7 1v9M7 10l8-2M7 10l-5 5" stroke="#d0606a" strokeWidth="1.200" /><path d="M7 2v8l-4 2" stroke="#3b9a6c" /><path d="M2 1l3 3M5 1L3 5M13 10l2 3M3 14h3" stroke="#c7303a" /></Svg>
                            <span className="pt-0.5">默认CSYS</span>
                        </div>
                    </td>
                    <td />
                </tr>
                <tr>
                    <td className={cell}>
                        <div className="flex items-center pl-[46px]">
                            <FeatureCheck label="造型1" />
                            <Svg className="mr-0.5"><Cube x={3} y={3} s={12} /><circle cx="4" cy="4" r="3.200" fill="#d8888c" stroke="#a3202a" strokeWidth="1.300" /><path d="M2 2l4 4M9 6l5-5" stroke="#a3202a" strokeWidth="1.500" /></Svg>
                            <span className="pt-0.5">造型1</span>
                        </div>
                    </td>
                    <td />
                </tr>
                <tr>
                    <td className={cell}>
                        <div className="flex items-center pl-[46px] text-[#ee1c24]">
                            <Svg className="mr-1"><path d="M0 8l7-6v4h9v4H7v4z" fill="#e0203a" /></Svg>
                            <span className="pt-0.5">----- 建模停止 -----</span>
                        </div>
                    </td>
                    <td />
                </tr>
            </tbody>
        </table>
    );
}

function Manager() {
    return (
        <aside className="flex flex-col w-[358px] shrink-0">
            <div className="flex items-center h-[21px] pl-[5px] pr-[7px] text-[#333]">
                <h2>管理器</h2>
                <button type="button" aria-label="浮动" className="ml-auto mr-2.5"><Svg size={9} vb={9}><path d="M.5 1h8v7h-8zM3 3.500h3v2H3z" stroke="#777" /></Svg></button>
                <button type="button" aria-label="关闭面板"><Svg size={11} vb={11}><path d="M.5.5h3l2 3 2-3h3L7 5.500l3.500 5h-3l-2-3-2 3h-3L4 5.500z" fill="#fff" stroke="#777" /></Svg></button>
            </div>
            <div className="flex flex-1 min-h-0">
                <div className="flex flex-col w-8 shrink-0 pl-0.5">
                    {sideIcons.map(([label, art], i) => (
                        <button
                            key={label}
                            type="button"
                            aria-label={label}
                            className={`flex items-center justify-center h-[47px] ${i === 0 ? 'bg-white border border-r-0 border-[#b9bec8]' : ''}`}
                        >
                            <Svg size={24} vb={24}>{art}</Svg>
                        </button>
                    ))}
                </div>
                <div className="flex flex-col flex-1 min-w-0 border border-[#b9bec8] mb-px pl-px pr-px">
                    <div className="flex h-6 shrink-0 text-black">
                        <Combo label="显示" value="显示常用" className="w-[150px] border-[#b4b8c2]!" />
                        <input type="text" aria-label="搜索特征" className="flex-1 min-w-0 bg-white border border-l-0 border-[#b4b8c2] outline-none px-1" />
                        <button type="button" aria-label="过滤" className="w-6 flex items-center justify-center bg-white border border-l-0 border-[#b4b8c2]">
                            <Svg><path d="M0 1h16l-6 7v7H6V8z" fill="#1793bd" /></Svg>
                        </button>
                    </div>
                    <div className="flex-1 min-h-0 bg-[repeating-linear-gradient(#ffffff_0_18px,#f5f5f5_18px_36px)] bg-[position:0_24px]">
                        <FeatureTree />
                    </div>
                    <button type="button" className="flex items-center gap-2 h-6 shrink-0 pl-1 bg-[#fcfcfc] border-t-2 border-[#b9bec8] font-bold text-[#333]">
                        <Svg size={9} vb={9}><path d="M1 0v9l7-4.500z" fill="#505767" /></Svg>
                        回放
                    </button>
                </div>
            </div>
        </aside>
    );
}

/* ---------- document view ---------- */

function Model() {
    return (
        <svg className="absolute left-[258px] top-[97px] w-[360px] h-[330px]" viewBox="620 290 360 330" fill="none" aria-label="零件模型">
            <path d="M627 391L706 306 780 240 885 326C910 344 938 352 966 354q6 1 6 7L970 551c-12 2-28 5-32 14-4 14-18 26-40 26L885 591V607H632q-5 0-5-5z" fill="#f09000" stroke="#ff9a08" strokeWidth="1.500" />
            {/* left body */}
            <path d="M628 531h80v75h-80z" fill="#c17500" />
            <path d="M626 530h8v76l-3 0q-4-1-4-5zM627 555h28v27h-28z" fill="#f09000" stroke="#ff9f14" strokeWidth="1.200" />
            <path d="M629 532h4v22h-4zM629 584h4v21h-4z" fill="#c17500" />
            <path d="M627 530h80M634 531v24M634 582v24M627 607h80" stroke="#ff9a08" strokeWidth="1.800" />
            <path d="M672 373h32v20h-32z" fill="#b97000" stroke="#ff9f14" strokeWidth="2.500" />
            <path d="M678 373v20M702 373v20" stroke="#ff9f14" strokeWidth="2" />
            <path d="M670 371h34M670 395h34" stroke="#6b4300" strokeDasharray="1 7" />
            <g stroke="#ff9f14" strokeWidth="1.500">
                <ellipse cx="682" cy="439" rx="17" ry="11" />
                <ellipse cx="682" cy="479" rx="17" ry="11" />
            </g>
            <g fill="url(#bore)" stroke="#6b4300" strokeWidth=".8" strokeDasharray="1 3">
                <ellipse cx="682" cy="439" rx="16" ry="10" />
                <ellipse cx="682" cy="479" rx="16" ry="10" />
                <ellipse cx="712" cy="458" rx="10" ry="12" />
            </g>
            <path d="M706 543c-26 0-40 14-40 28 0 15 16 25 40 25" stroke="#ff9f14" strokeWidth="2.500" fill="#dd8600" />
            <path d="M706 545c-10 0-16 2-18 4v8l4 2c-6 4-8 10-5 14l-8-2-12-12c3-8 14-14 27-14z" fill="#bf7400" />
            <path d="M706 554c-14 0-20 8-20 14s8 12 20 12" fill="#ba7000" stroke="#ff9f14" strokeWidth="2.500" />
            <path d="M668 559l20 14M687 545v12" stroke="#ff9f14" strokeWidth="1.500" />
            <path d="M706 543c-26 0-40 14-40 28s16 25 40 25M706 558c-10 0-17 5-18 10" stroke="#6b4300" strokeWidth=".8" strokeDasharray="1 4" />
            <path d="M676 428v125M640 425l40-50c10-14 14-14 8-2l-20 30M666 520c0-18 38-18 38 0" stroke="#f89a12" strokeWidth="2" opacity=".4" />
            <path d="M628 498h46M628 493h46v36" stroke="#7a4b00" opacity=".8" />
            <path d="M627 529h66" stroke="#f02a10" strokeWidth="1.800" />
            <path d="M688 526l8 3-8 3z" fill="#e01808" />
            <path d="M626 470v59" stroke="#3c3c86" strokeWidth="1.200" />
            <path d="M622 445h8l-8 12h9M623 458h9l-5 8" stroke="#a06000" strokeWidth="1.400" />
            <path d="M625 477h3l1 6-2 5h-2l-2-6z" fill="#1414e0" />
            <path d="M627 462v14" stroke="#7a4b00" strokeWidth="2.500" />
            {/* right body */}
            <path d="M885 326c18 12 30 18 40 21V545q-18 6-40-10z" fill="url(#shade)" />
            <path d="M885 535c12 12 24 13 38 10 18-4 10-18 20-24 8-4 17-4 27-6v36c-12 2-28 5-32 14-4 14-18 26-40 26h-13z" fill="url(#skirt)" stroke="#ff9a08" strokeWidth="2" />
            <path d="M901 544v46M937 526v36M963 517v35M971 356l-1 195" stroke="#ff9a08" strokeWidth="2" />
            <path d="M885 535c12 12 24 13 38 10 18-4 10-18 20-24 8-4 17-4 27-6M904 590c20-2 30-12 34-24" stroke="#6b4300" strokeWidth=".8" strokeDasharray="1 3" />
            <path d="M885 348c16 20 34 32 56 39h30M941 387v17h-46v-17h-10M885 364c18 24 36 34 54 40" stroke="#fb9d18" strokeWidth="1.500" opacity=".45" />
            <path d="M885 326C910 344 938 352 966 354q6 1 6 7" stroke="#ff9a08" strokeWidth="1.800" />
        </svg>
    );
}

const viewBtn = 'flex items-center gap-1 h-5';

function ViewTools() {
    return (
        <>
            <div className="absolute left-[207px] top-[3px] flex items-center">
                <button type="button" aria-label="退出" className={`${viewBtn} mr-2`}>
                    <Svg><path d="M5 4V1h10v14H5v-3" stroke="#999" strokeWidth="1.400" /><path d="M1 8l5-4v3h6v2H6v3z" fill="#999" /></Svg>
                </button>
                <button type="button" aria-label="工作平面" className={`${viewBtn} mr-3`}>
                    <Svg><path d="M1 1h6v6H1z" fill="#a8cbe0" stroke="#4a7f9d" strokeWidth=".7" /><path d="M2 8l9 3 5-5M3 11l8 3 5-4M2 8v5l8 3 6-3V5" stroke="#6cb33c" /><path d="M4 7l5 2" stroke="#f0a92a" strokeWidth="1.500" /></Svg>
                    <Caret />
                </button>
                <button type="button" aria-label="擦除" className={`${viewBtn} mr-2`}>
                    <Svg><path d="M7 7l5-5 3 2-6 6z" fill="#f7c66a" stroke="#9a6c20" strokeWidth=".6" /><path d="M3 11l4-4 2 3-4 4-3-1z" fill="#d64050" /></Svg>
                </button>
                <button type="button" aria-label="定向视图" className={`${viewBtn} mr-2`}>
                    <Svg><Cube x={0} y={0} s={16} /><path d="M1 4l7-3 7 3-7 3z" fill="#f9d94a" /><path d="M8 0v5" stroke="#3b9a35" strokeWidth="1.500" /></Svg>
                </button>
                <button type="button" aria-label="着色" className={viewBtn}>
                    <Svg><Cube x={-1} y={-1} s={18} /></Svg>
                    <Caret />
                </button>
            </div>
            <div className="absolute left-[528px] top-0.5 flex items-center gap-[9px]">
                <button type="button" aria-label="标注" className={viewBtn}>
                    <Svg><path d="M3 1v11M13 1v11M3 6h10" stroke="#1c8fb6" strokeWidth="1.500" /><path d="M2 14h12" stroke="#b8242c" strokeWidth="1.800" /></Svg>
                    <Caret />
                </button>
                <button type="button" aria-label="显示模式" className={viewBtn}>
                    <Svg><path d="M1 1h8v6H1z" fill="#8fb6c8" stroke="#555" strokeWidth=".8" /><path d="M5 7v7h6M5 9h5" stroke="#3f94b4" strokeWidth="1.300" /><circle cx="13" cy="6" r="2" fill="#ddd" stroke="#888" strokeWidth=".6" /><circle cx="13" cy="12" r="2.500" fill="#f7c22c" /></Svg>
                    <Caret />
                </button>
                <button type="button" aria-label="线宽" className="w-4 h-[7px] bg-black border border-[#888]" />
                <button type="button" aria-label="颜色" className="w-4 h-4 bg-[#ffbb00] border border-[#1d2d8c]" />
                <button type="button" aria-label="图层" className={viewBtn}>
                    <Svg><Layer y={2} /></Svg>
                    <Caret />
                </button>
                <div className="relative">
                    <Combo label="当前图层" value="图层0000" className="w-[114px] h-[22px] text-black [&>select]:pl-[38px]" />
                    <span className="absolute left-[5px] top-[3px] flex gap-0.5 pointer-events-none">
                        <Svg><path d="M6 11c0-3-3-3-3-6 0-5 9-5 9 0 0 3-3 3-3 6z" fill="#fff6a0" stroke="#b5962a" /><path d="M6 12h3v3H6z" fill="#777" /></Svg>
                        <Svg><path d="M1 1h14v14H1z" fill="#ffef7a" /><circle cx="8" cy="8" r="6.500" fill="#f7d417" stroke="#4d91b5" strokeWidth="1.200" /></Svg>
                    </span>
                </div>
            </div>
        </>
    );
}

function DocumentView() {
    return (
        <main className="flex flex-col flex-1 min-w-0 ml-0.5">
            <div className="flex h-[23px] shrink-0 items-stretch shadow-[inset_0_-1px_0_#b9bec8]">
                <button type="button" className="flex items-center gap-[5px] w-[156px] pl-[30px] ml-px bg-[#fdfdfd] border border-b-0 border-[#b9bec8] text-black whitespace-nowrap">
                    * 山涧果子.Z3PRT
                    <Svg size={10} vb={10}><path d="M1 1l8 8M9 1L1 9" stroke="#7a6a3a" strokeWidth="2" /></Svg>
                </button>
                <button type="button" aria-label="新建标签" className="px-1.5"><Svg size={10} vb={10}><path d="M5 0v10M0 5h10" stroke="#999" strokeWidth="1.500" /></Svg></button>
                <button type="button" aria-label="标签列表" className="ml-auto pr-1.5"><Svg size={8} vb={8}><path d="M0 1h8" stroke="#888" strokeWidth="1.500" /><path d="M0 3.500h8L4 7.500z" fill="#888" /></Svg></button>
            </div>
            <div className="relative flex-1 min-h-0 overflow-hidden mr-0.5 mb-0.5 border-l border-[#b9bec8] bg-linear-to-b from-white to-[#9f9f9f]">
                <p className="absolute left-[21px] top-2 text-[11px] leading-[14px] text-[#111]">
                    &lt;单击右键&gt;环境相关选项.<br />
                    &lt;Shift +鼠标右键&gt; 显示选择过滤器.
                </p>
                <ViewTools />
                <Model />
                <svg className="absolute left-[52px] bottom-[61px]" width="70" height="60" viewBox="0 0 70 60" fill="none" aria-label="坐标轴">
                    <path d="M6 8l3 6 4-6M10 14v4" stroke="#2fbf2f" strokeWidth="1.300" />
                    <path d="M9.500 46V18" stroke="#0000ff" strokeWidth="2" />
                    <path d="M7 19l3-5 3 5zM8 19h4v4H8z" fill="#141478" />
                    <path d="M5 3h8L5 14h9" stroke="#1a1aff" strokeWidth="1.400" />
                    <path d="M10 46h42" stroke="#ff0000" strokeWidth="2" />
                    <path d="M46 44l8 2-8 2z" fill="#a01010" />
                    <path d="M55 42l9 12M64 42l-9 12" stroke="#ff1010" strokeWidth="1.400" />
                </svg>
                <span className="absolute left-1 bottom-0 text-[17px] leading-5 text-black">143.969mm</span>
            </div>
        </main>
    );
}

function NetWidget() {
    return (
        <div className="absolute right-[5px] top-[335px] w-[42px] h-[150px] z-20 flex flex-col items-center rounded-t-lg rounded-b-[21px] bg-[#373a45] text-white shadow-md">
            <Svg size={18} vb={18} className="mt-[9px]">
                <path d="M9 0l8 3v6c0 4-4 7-8 9-4-2-8-5-8-9V3z" fill="#12b76a" stroke="#2877d8" strokeWidth="1.200" />
                <path d="M5.500 8.500l3 3 5-5" stroke="#fff" strokeWidth="2" />
            </Svg>
            <div className="relative w-[42px] h-[42px] mt-2 flex items-center justify-center">
                <Svg size={42} vb={42} className="absolute inset-0">
                    <circle cx="21" cy="21" r="19.500" fill="#2c2e38" stroke="#535763" strokeWidth="1.500" />
                    <path d="M2 17v4a19 19 0 0 0 38 0v-4" stroke="url(#gauge)" strokeWidth="2" />
                </Svg>
                <span className="relative text-[17px] font-bold">60<span className="text-[9px] font-normal">%</span></span>
            </div>
            {[['M4 8V2M1 4.500L4 1l3 3.500z', '#28a4ff'], ['M4 0v6M1 3.500L4 7l3-3.500z', '#1fbf5f']].map(([d, c]) => (
                <div key={c} className="flex items-center gap-[3px] mt-1">
                    <Svg size={8} vb={8}><path d={d} fill={c} stroke={c} strokeWidth=".8" /></Svg>
                    <div className="text-[11px] leading-[13px]">0.9<div className="text-[9px] leading-[11px] text-[#c9cbd2]">K/s</div></div>
                </div>
            ))}
        </div>
    );
}

function StatusBar() {
    return (
        <footer className="flex items-center h-[30px] shrink-0 pl-[5px] border-b-2 border-[#cdd3db] text-[#333]">
            <span className="pt-0.5">选择命令或实体</span>
            <div className="flex items-center ml-auto">
                <span className="w-px h-6 bg-[#a9afba] mr-3.5" />
                <button type="button" aria-label="管理器开关" className="w-[22px] h-[22px] mr-[11px] flex items-center justify-center bg-[#fbe08b] border border-[#d3a12a]">
                    <Svg><rect x="1" y="2" width="14" height="12" fill="#fff" stroke="#2b6e8f" /><path d="M1 2h14v3H1z" fill="#2b8fb8" /><path d="M4 6v7M8 7h5M10.500 7v6" stroke="#3c5a6c" strokeWidth="1.500" /></Svg>
                </button>
                <button type="button" aria-label="屏幕" className="mr-3"><Svg><rect x="0" y="2" width="16" height="9" rx="1" fill="#1d8fbd" stroke="#466b7d" strokeWidth=".7" /><path d="M5 14h6M8 11v3" stroke="#555" strokeWidth="1.500" /></Svg></button>
                <button type="button" aria-label="输出信息" className="mr-3"><Svg><rect x="1" y="1.500" width="14" height="13" fill="#fff" stroke="#2b6ea8" /><path d="M1 2h14v2.500H1z" fill="#3f8fd0" /><path d="M3 7.500h10M3 9.500h10M3 11.500h10" stroke="#4a90c4" /></Svg></button>
                <div className="relative w-[350px]">
                    <input type="text" aria-label="命令输入" className="block w-full h-[22px] bg-white border border-[#b9bec8] border-r-0 outline-none px-1" />
                    <span className="absolute right-3.5 -top-[3px] text-[17px] leading-6 text-[#96999f] whitespace-nowrap pointer-events-none">CSDN @山涧果子</span>
                </div>
            </div>
        </footer>
    );
}

const callout = 'absolute z-30 flex items-center justify-center rounded-full bg-[#fb4141] text-white text-[18px] pointer-events-none';

export default function App() {
    return (
        <div className="relative flex flex-col h-screen overflow-hidden bg-[#e1e5e9] text-[12px] leading-4 font-['Open_Sans','Noto_Sans_CJK_SC',sans-serif]">
            <svg className="absolute w-0 h-0" aria-hidden="true">
                <defs>
                    <linearGradient id="teal" x1="0" y1="0" x2="1" y2="1"><stop offset="0" stopColor="#45c6e6" /><stop offset="1" stopColor="#0a7198" /></linearGradient>
                    <linearGradient id="gold" x1="0" y1="0" x2="0" y2="1"><stop offset="0" stopColor="#ffdc5e" /><stop offset="1" stopColor="#f2a90f" /></linearGradient>
                    <linearGradient id="red" x1="0" y1="0" x2="1" y2="1"><stop offset="0" stopColor="#ea3a40" /><stop offset="1" stopColor="#b50f1a" /></linearGradient>
                    <linearGradient id="steel" x1="0" y1="0" x2="0" y2="1"><stop offset="0" stopColor="#7a7a7a" /><stop offset=".4" stopColor="#ececec" /><stop offset="1" stopColor="#5c5c5c" /></linearGradient>
                    <linearGradient id="bore" x1="0" y1="0" x2="1" y2="0"><stop offset="0" stopColor="#a86600" /><stop offset="1" stopColor="#cf8000" /></linearGradient>
                    <linearGradient id="shade" x1="0" y1="0" x2="1" y2="0"><stop offset="0" stopColor="#d98200" /><stop offset="1" stopColor="#f09000" /></linearGradient>
                    <linearGradient id="skirt" x1="0" y1="0" x2="1" y2="0"><stop offset="0" stopColor="#c67800" /><stop offset=".5" stopColor="#c07400" /><stop offset=".6" stopColor="#8f5800" /><stop offset="1" stopColor="#c07400" /></linearGradient>
                    <linearGradient id="gauge" x1="0" y1="0" x2="0" y2="1"><stop offset="0" stopColor="#f0b400" /><stop offset=".5" stopColor="#b5d048" /><stop offset="1" stopColor="#35c8a8" /></linearGradient>
                </defs>
            </svg>
            <TitleBar />
            <TabRow />
            <Ribbon />
            <SelectionBar />
            <div className="flex flex-1 min-h-0">
                <Manager />
                <DocumentView />
            </div>
            <StatusBar />

            <ContextMenu />
            <NetWidget />
            <div className="absolute z-30 left-[167px] top-[141px] w-[88px] h-[33px] border-2 border-[#ff0000] pointer-events-none" />
            <span className={`${callout} left-[192px] top-[93px] w-10 h-10`}>1</span>
            <span className={`${callout} left-[641px] top-[384px] w-[42px] h-[42px] border border-[#ffe3d6]`}>2</span>
            <span className={`${callout} left-[787px] top-[404px] w-10 h-10`}>3</span>
        </div>
    );
}
